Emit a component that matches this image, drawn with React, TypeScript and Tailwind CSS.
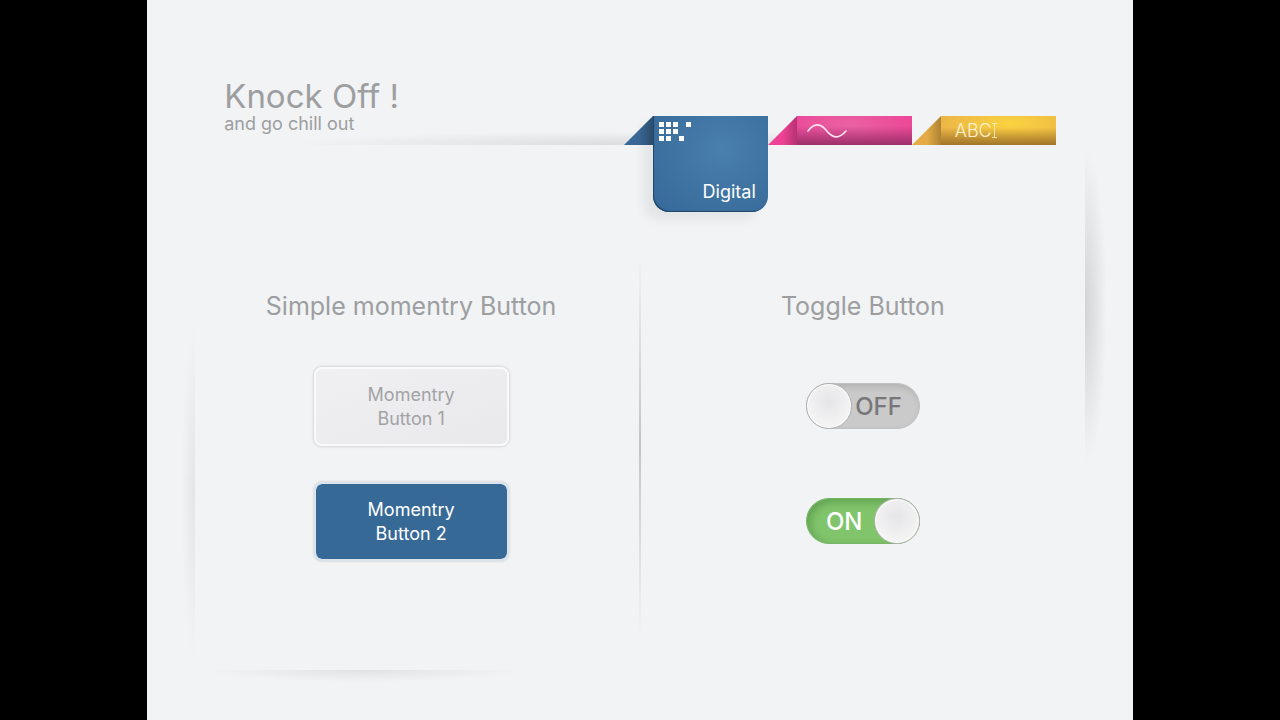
import { useState, type ReactNode } from 'react';
import clsx from 'clsx';

const tabs = [
  {
    id: 'digital',
    fold: 'text-[#3a6896]',
    body: 'bg-[radial-gradient(ellipse_at_60%_35%,#4a80ae,#3d719f_60%,#36699b)]',
  },
  {
    id: 'analog',
    fold: 'text-[#ee4296]',
    body: 'bg-[linear-gradient(to_bottom,transparent_35%,rgba(90,30,70,0.55)),radial-gradient(ellipse_at_45%_30%,#ea62a2,#ec4698_75%)]',
  },
  {
    id: 'text',
    fold: 'text-[#e5ac45]',
    body: 'bg-[linear-gradient(to_bottom,transparent_40%,rgba(110,75,20,0.6)),radial-gradient(ellipse_at_60%_25%,#fad33f,#ecb447_75%)]',
  },
];

const pixels = [
  [0, 0], [7, 0], [14, 0], [27, 0],
  [0, 7], [7, 7], [14, 7],
  [0, 14], [7, 14], [20, 14],
];

const Fold = ({ id, className }: { id: string; className: string }) => (
  <svg viewBox="0 0 29 29" className={clsx('h-[29px] w-[29px] shrink-0', className)} aria-hidden="true">
    <defs>
      <linearGradient id={`fold-${id}`} x1="0" x2="1">
        <stop offset="0.5" stopColor="#000" stopOpacity="0" />
        <stop offset="1" stopColor="#000" stopOpacity="0.24" />
      </linearGradient>
    </defs>
    <path d="M0 29 29 0V29Z" fill="currentColor" />
    <path d="M0 29 29 0V29Z" fill={`url(#fold-${id})`} />
  </svg>
);

const TabContent = ({ id }: { id: string }) => {
  if (id === 'digital') {
    return (
      <>
        <svg viewBox="0 0 32 19" className="h-[19px] w-8" fill="#fff" aria-hidden="true">
          {pixels.map(([x, y]) => (
            <rect key={`${x}-${y}`} x={x} y={y} width="5" height="5" />
          ))}
        </svg>
        <span className="self-end text-lg leading-6 text-white">Digital</span>
      </>
    );
  }
  if (id === 'analog') {
    return (
      <svg viewBox="0 0 40 14" className="ml-1 h-[14px] w-10" fill="none" stroke="#ffe3f1" strokeWidth="1.6" strokeLinecap="round" aria-label="Analog">
        <path d="M1 7C7 -1 13 -1 19 6C26 15 32 15 39 7" />
      </svg>
    );
  }
  return (
    <span className="ml-2 flex items-center text-lg leading-5 font-light text-[#fff3cf]">
      ABC
      <svg viewBox="0 0 5 15" className="h-[15px] w-[5px] opacity-80" fill="none" stroke="currentColor" aria-hidden="true">
        <path d="M0 .5H5M0 14.5H5M2.5 .5V14.5" />
      </svg>
    </span>
  );
};

const Toggle = ({ label, defaultOn }: { label: string; defaultOn: boolean }) => {
  const [on, setOn] = useState(defaultOn);

  return (
    <label className="relative flex h-[46px] w-[114px] cursor-pointer items-center">
      <input
        type="checkbox"
        role="switch"
        aria-label={label}
        checked={on}
        onChange={() => setOn(!on)}
        className="absolute inset-0 appearance-none rounded-full border border-[#c0c0c1] bg-[#cacacb] shadow-[inset_2px_3px_6px_rgba(0,0,0,0.12)] checked:border-[#76b566] checked:bg-[#80c46b] checked:shadow-[inset_3px_3px_8px_rgba(0,60,0,0.26)]"
      />
      <span className={clsx('relative flex w-full items-center justify-between', on && 'flex-row-reverse')}>
        <span className="h-[46px] w-[46px] rounded-full border border-[#b2b2b2] bg-[radial-gradient(circle_at_50%_40%,#e5e5e7,#f3f3f4_65%)] shadow-[inset_0_0_0_1px_#fff]" />
        <span className={clsx('pt-[2px] text-2xl leading-8 font-medium', on ? 'pl-5 text-white' : 'pr-[18px] text-[#77777a]')}>
          {on ? 'ON' : 'OFF'}
        </span>
      </span>
    </label>
  );
};

const Column = ({ title, className, children }: { title: string; className?: string; children: ReactNode }) => (
  <section className={clsx('flex flex-col items-center pt-[145px] pb-[109px]', className)}>
    <h2 className="mb-[45px] text-[25px] leading-8 text-[#9d9ea0]">{title}</h2>
    {children}
  </section>
);

export default function App() {
  const [active, setActive] = useState('digital');

  return (
    <div className="min-h-screen bg-black font-['Inter',sans-serif]">
      <main className="mx-auto min-h-screen w-[77%] bg-[#f1f3f5] px-12 pb-12">
        <header className="relative flex items-end justify-between px-[29px] pt-20">
          <div className="absolute bottom-0 left-[10%] h-[14px] w-[60%] bg-[radial-gradient(farthest-side_at_70%_100%,rgba(0,0,0,0.1),transparent)]" />
          <div className="relative pb-[10px] text-[#9d9ea0]">
            <h1 className="text-[33px] leading-8">Knock Off !</h1>
            <p className="text-lg leading-[23px]">and go chill out</p>
          </div>

          <nav className="relative z-10 flex h-[29px] items-start">
            {tabs.map((tab) => (
              <button
                key={tab.id}
                type="button"
                onClick={() => setActive(tab.id)}
                className="flex cursor-pointer items-start"
              >
                <Fold id={tab.id} className={tab.fold} />
                <span
                  className={clsx(
                    'flex w-[115px] flex-col',
                    tab.body,
                    tab.id === active
                      ? 'h-24 justify-between rounded-b-2xl px-[6px] pt-[6px] pr-3 pb-2 shadow-[inset_1px_-1px_1px_#1f4568,-10px_8px_10px_rgba(60,50,60,0.07)]'
                      : 'h-[29px] items-start justify-center px-[6px]',
                  )}
                >
                  <TabContent id={tab.id} />
                </span>
              </button>
            ))}
          </nav>
        </header>

        <div className="relative grid grid-cols-[1fr_2px_1fr]">
          <div className="absolute top-1 left-full h-[316px] w-[22px] bg-[radial-gradient(farthest-side_at_0%_50%,rgba(0,0,0,0.13),transparent)]" />
          <div className="absolute right-full bottom-2 h-[340px] w-[14px] bg-[radial-gradient(farthest-side_at_100%_50%,rgba(0,0,0,0.06),transparent)]" />
          <div className="absolute top-full left-[1%] h-3 w-[36%] bg-[radial-gradient(farthest-side_at_50%_0%,rgba(0,0,0,0.07),transparent)]" />

          <Column title="Simple momentry Button" className="pr-3">
            <div className="flex flex-col gap-9">
              <button
                type="button"
                className="h-[79px] w-[195px] cursor-pointer rounded-lg border-2 border-[#fafafb] bg-linear-to-br from-[#f0f0f2] to-[#e9e9eb] text-lg leading-6 text-[#a2a3a5] shadow-[0_0_3px_rgba(0,0,0,0.25)]"
              >
                Momentry
                <br />
                Button 1
              </button>
              <button
                type="button"
                className="h-[79px] w-[195px] cursor-pointer rounded-lg border-2 border-[#d9e4ef] bg-[#376997] bg-clip-padding text-lg leading-6 text-white shadow-[0_0_3px_rgba(0,0,0,0.18)]"
              >
                Momentry
                <br />
                Button 2
              </button>
            </div>
          </Column>

          <div className="mt-[110px] mb-9 bg-linear-to-b from-transparent via-[#c3c4c6] to-transparent" />

          <Column title="Toggle Button">
            <div className="flex flex-col gap-[69px] pt-4">
              <Toggle label="First toggle" defaultOn={false} />
              <Toggle label="Second toggle" defaultOn />
            </div>
          </Column>
        </div>
      </main>
    </div>
  );
}
